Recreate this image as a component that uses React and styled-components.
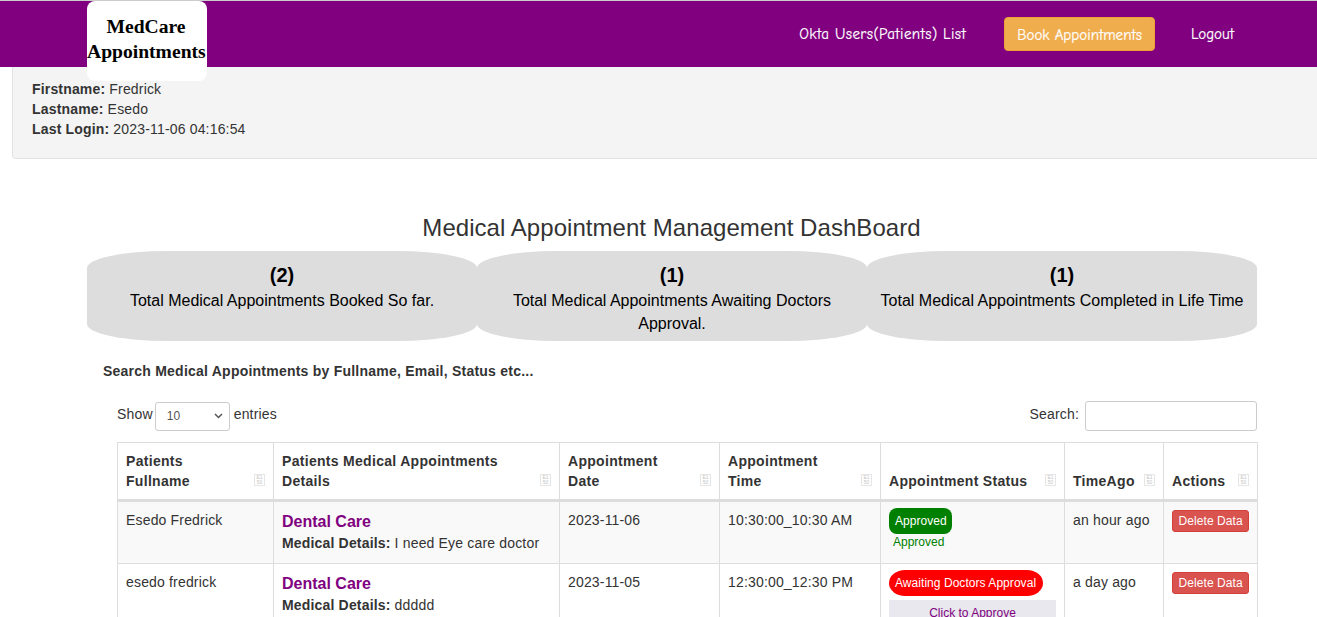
import styled, { createGlobalStyle } from 'styled-components';

const GlobalStyle = createGlobalStyle`
  html, body {
    margin: 0;
    height: 617px;
    overflow: hidden;
    background: #fff;
  }
  body {
    font-family: 'Liberation Sans', Arial, sans-serif;
    font-size: 14px;
    letter-spacing: 0.17px;
    line-height: 20px;
    color: #333;
  }
  * { box-sizing: border-box; }
`;

const Page = styled.div`
  position: relative;
  height: 617px;
  overflow: hidden;
`;

const Navbar = styled.nav`
  position: absolute;
  top: 0;
  left: 0;
  right: 0;
  height: 67px;
  display: flex;
  align-items: flex-start;
  justify-content: space-between;
  padding: 1px 83px 0 87px;
  background: purple;
  border-top: 1px solid #ccc;
  z-index: 10;
`;

const Logo = styled.div`
  width: 120px;
  height: 80px;
  margin-top: -1px;
  padding: 14px 2px 0 0;
  background: #fff;
  border-radius: 8px;
  color: #000;
  font-family: 'Liberation Serif', 'Times New Roman', serif;
  font-size: 19.6px;
  font-weight: bold;
  letter-spacing: 0;
  line-height: 24.5px;
  text-align: center;
  white-space: nowrap;
`;

const NavLinks = styled.div`
  display: flex;
  align-items: center;
  height: 50px;
  margin-top: 7px;
`;

const NavLink = styled.a`
  display: block;
  margin-left: ${(p) => p.$gap || 0}px;
  color: #fff;
  font-family: 'Comic Neue', 'Noto Sans', sans-serif;
  font-size: 15px;
  letter-spacing: ${(p) => p.$spacing || 0}px;
  -webkit-text-stroke: 0.2px #fff;
  white-space: nowrap;
`;

const NavButton = styled.a`
  display: block;
  margin-left: 38px;
  padding: 7px 12px 5px;
  height: 34px;
  background: #f0ad4e;
  border: 1px solid #eea236;
  border-radius: 4px;
  color: #fff;
  font-family: 'Comic Neue', 'Noto Sans', sans-serif;
  font-size: 15px;
  letter-spacing: 0;
  -webkit-text-stroke: 0.2px #fff;
  white-space: nowrap;
`;

const Well = styled.section`
  height: 92px;
  margin: 67px -20px 0 12px;
  padding: 12px 19px;
  background: #f4f4f4;
  border: 1px solid #e3e3e3;
  border-top: 0;
  border-radius: 0 0 4px 4px;
`;

const Heading = styled.h2`
  margin: 54px 0 0;
  font-size: 24px;
  font-weight: normal;
  letter-spacing: 0.05px;
  line-height: 30px;
  text-align: center;
  width: 1343px;
`;

const Stats = styled.div`
  display: grid;
  grid-template-columns: repeat(3, 390px);
  margin: 8px 0 0 87px;
`;

const Stat = styled.div`
  height: 90px;
  padding: 12px 10px 0;
  background: #ddd;
  border-radius: 80px / 17px;
  color: #000;
  font-size: 16px;
  letter-spacing: 0;
  line-height: 23px;
  text-align: center;
`;

const StatCount = styled.div`
  margin-bottom: 1px;
  font-size: 20px;
  font-weight: bold;
  line-height: 25px;
`;

const SearchTitle = styled.h5`
  margin: 21px 0 0 103px;
  font-size: 14px;
  font-weight: bold;
  letter-spacing: 0.23px;
  line-height: 18px;
`;

const Controls = styled.div`
  display: flex;
  justify-content: space-between;
  align-items: flex-start;
  width: 1140px;
  height: 30px;
  margin: 21px 0 0 117px;
`;

const ControlGroup = styled.label`
  display: flex;
  align-items: flex-start;
  gap: ${(p) => p.$gap}px;
  line-height: 27px;
`;

const SelectBox = styled.div`
  position: relative;
  width: 75px;
  height: 29px;
  margin: 1px 2px 0 0;
  padding: 3px 11px;
  background: #fff;
  border: 1px solid #ccc;
  border-radius: 3px;
  color: #555;
  font-size: 12px;
  line-height: 20px;
  svg {
    position: absolute;
    right: 6px;
    top: 10px;
  }
`;

const SearchInput = styled.input`
  width: 172px;
  height: 30px;
  background: #fff;
  border: 1px solid #ccc;
  border-radius: 3px;
`;

const Table = styled.table`
  width: 1140px;
  margin: 11px 0 0 117px;
  border-collapse: collapse;
  table-layout: fixed;
`;

const Th = styled.th`
  position: relative;
  height: 58px;
  padding: 8px 30px 8px 8px;
  border: 1px solid #ddd;
  border-bottom: 3px solid #ddd;
  font-weight: bold;
  letter-spacing: 0.3px;
  text-align: left;
  vertical-align: bottom;
`;

const SortGlyph = styled.span`
  position: absolute;
  right: 8px;
  bottom: 13px;
  width: 11px;
  height: 12px;
  border: 1px solid #e6e6e6;
  color: #c4c4c4;
  font-size: 5px;
  font-weight: normal;
  letter-spacing: 0;
  line-height: 5px;
  text-align: center;
`;

const Row = styled.tr`
  background: ${(p) => (p.$striped ? '#f9f9f9' : '#fff')};
`;

const Td = styled.td`
  height: 63px;
  padding: 8px;
  border: 1px solid #ddd;
  vertical-align: top;
`;

const Service = styled.div`
  color: purple;
  font-size: 16px;
  font-weight: bold;
  letter-spacing: 0;
  line-height: 23px;
`;

const Badge = styled.div`
  display: inline-block;
  height: 26px;
  margin-top: -2px;
  padding: ${(p) => p.$padding};
  border-radius: ${(p) => p.$radius};
  background: ${(p) => p.$color};
  color: #fff;
  font-size: 12px;
  letter-spacing: 0.05px;
  line-height: 26px;
  vertical-align: top;
`;

const StatusNote = styled.div`
  padding-left: 4px;
  color: green;
  font-size: 12px;
  letter-spacing: 0;
  line-height: 16px;
`;

const ApproveLink = styled.div`
  width: 167px;
  margin-top: 4px;
  padding: 3px 0 2px;
  background: #e8e8ee;
  color: purple;
  font-size: 12px;
  letter-spacing: 0;
  text-align: center;
`;

const DeleteButton = styled.a`
  display: inline-block;
  height: 22px;
  padding: 0 5.5px;
  background: #d9534f;
  border: 1px solid #d43f3a;
  border-radius: 3px;
  color: #fff;
  font-size: 12px;
  letter-spacing: 0.08px;
  line-height: 20px;
  white-space: nowrap;
`;

const columns = [
  { width: 156, title: 'Patients Fullname' },
  { width: 286, title: 'Patients Medical Appointments Details' },
  { width: 160, title: 'Appointment Date' },
  { width: 161, title: 'Appointment Time' },
  { width: 184, title: 'Appointment Status' },
  { width: 99, title: 'TimeAgo' },
  { width: 94, title: 'Actions' },
];

const stats = [
  { count: '(2)', label: 'Total Medical Appointments Booked So far.' },
  { count: '(1)', label: 'Total Medical Appointments Awaiting Doctors Approval.' },
  { count: '(1)', label: 'Total Medical Appointments Completed in Life Time' },
];

export default function App() {
  return (
    <Page>
      <GlobalStyle />
      <Navbar>
        <Logo>
          MedCare
          <br />
          Appointments
        </Logo>
        <NavLinks>
          <NavLink $spacing={0.43}>Okta Users(Patients) List</NavLink>
          <NavButton>Book Appointments</NavButton>
          <NavLink $gap={36}>Logout</NavLink>
        </NavLinks>
      </Navbar>

      <Well>
        <div><b>Firstname:</b> Fredrick</div>
        <div><b>Lastname:</b> Esedo</div>
        <div><b>Last Login:</b> 2023-11-06 04:16:54</div>
      </Well>

      <Heading>Medical Appointment Management DashBoard</Heading>

      <Stats>
        {stats.map((s) => (
          <Stat key={s.label}>
            <StatCount>{s.count}</StatCount>
            {s.label}
          </Stat>
        ))}
      </Stats>

      <SearchTitle>Search Medical Appointments by Fullname, Email, Status etc...</SearchTitle>

      <Controls>
        <ControlGroup $gap={2}>
          Show
          <SelectBox>
            10
            <svg width="9" height="6" viewBox="0 0 9 6" fill="none" stroke="#555" strokeWidth="1.5">
              <path d="M1 1l3.5 3.5L8 1" />
            </svg>
          </SelectBox>
          entries
        </ControlGroup>
        <ControlGroup $gap={6}>
          Search:
          <SearchInput />
        </ControlGroup>
      </Controls>

      <Table>
        <colgroup>
          {columns.map((c) => (
            <col key={c.title} width={c.width} />
          ))}
        </colgroup>
        <thead>
          <tr>
            {columns.map((c) => (
              <Th key={c.title}>
                {c.title}
                <SortGlyph>E1<br />50</SortGlyph>
              </Th>
            ))}
          </tr>
        </thead>
        <tbody>
          <Row $striped>
            <Td>Esedo Fredrick</Td>
            <Td>
              <Service>Dental Care</Service>
              <b>Medical Details:</b> I need Eye care doctor
            </Td>
            <Td>2023-11-06</Td>
            <Td>10:30:00_10:30 AM</Td>
            <Td>
              <Badge $color="green" $radius="8px" $padding="0 5px 0 6px">Approved</Badge>
              <StatusNote>Approved</StatusNote>
            </Td>
            <Td>an hour ago</Td>
            <Td><DeleteButton>Delete Data</DeleteButton></Td>
          </Row>
          <Row>
            <Td>esedo fredrick</Td>
            <Td>
              <Service>Dental Care</Service>
              <b>Medical Details:</b> ddddd
            </Td>
            <Td>2023-11-05</Td>
            <Td>12:30:00_12:30 PM</Td>
            <Td>
              <Badge $color="red" $radius="16px / 13px" $padding="0 7px 0 6px">Awaiting Doctors Approval</Badge>
              <ApproveLink>Click to Approve</ApproveLink>
            </Td>
            <Td>a day ago</Td>
            <Td><DeleteButton>Delete Data</DeleteButton></Td>
          </Row>
        </tbody>
      </Table>
    </Page>
  );
}
